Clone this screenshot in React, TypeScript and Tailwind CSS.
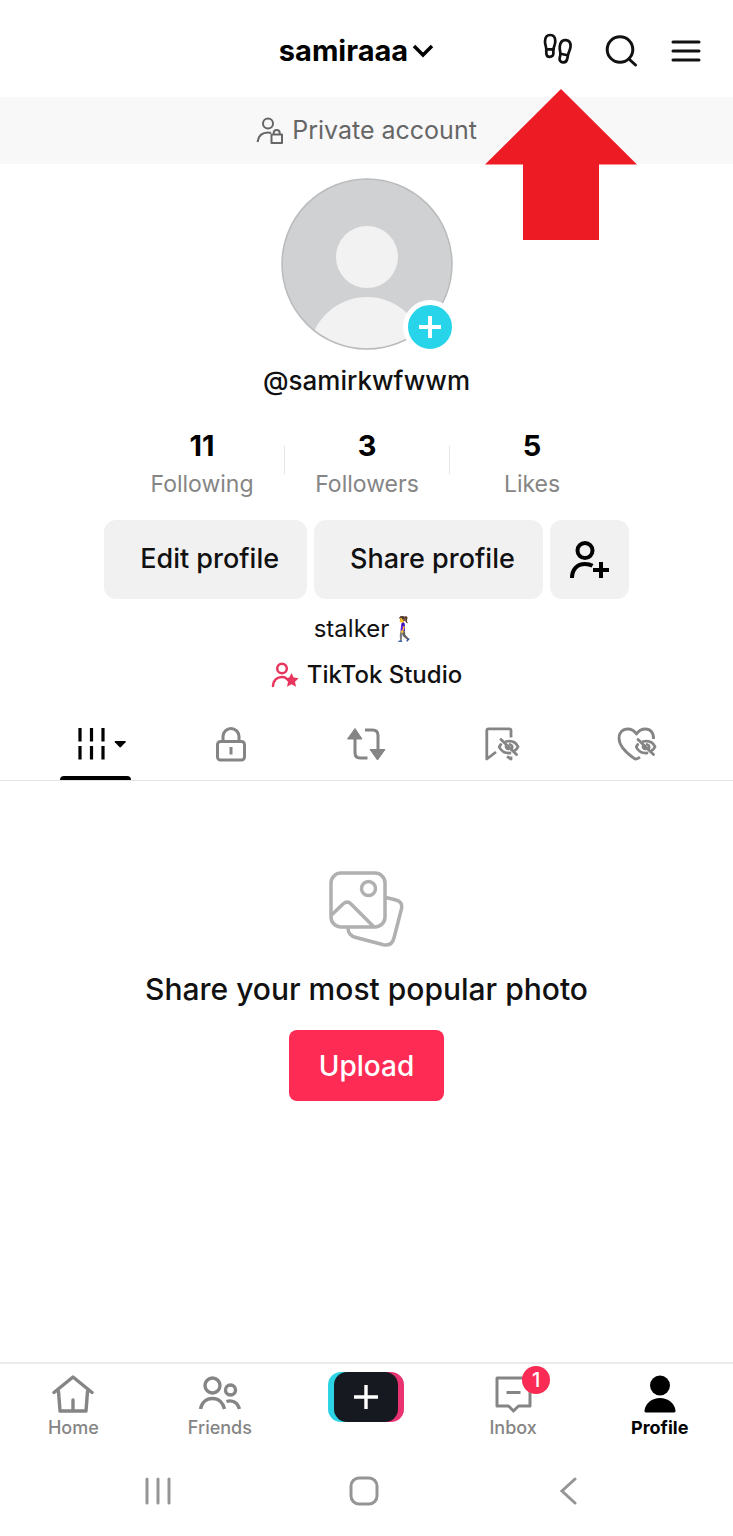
import { useState } from 'react';

const stats = [
  { value: '11', label: 'Following' },
  { value: '3', label: 'Followers' },
  { value: '5', label: 'Likes' },
];

const FootstepsIcon = () => (
  <svg width="30" height="36" viewBox="0 0 30 36" fill="none" stroke="currentColor" strokeWidth="2.700" strokeLinejoin="round" strokeLinecap="round">
    <path d="M7.300 2C4 2 2 4.600 2 8.600c0 3.200 1.300 5 1.300 8v3.600c0 2.400 1.200 3.600 3.500 3.600s3.800-1.500 3.600-3.900c-.2-2.100-.4-3.100.3-5.100.8-2.100 1.600-4 1.600-6.500C12.300 4.500 10.700 2 7.300 2Z" />
    <path d="M3.400 16.300h7.200" />
    <path d="M22.900 7.200c3.400.4 5 3.200 4.600 6.800-.4 3-1.900 5-2.400 7.800l-.8 3.800c-.6 2.700-2.200 4.200-4.700 3.700-2.300-.4-3.400-2.200-2.900-4.500.5-2.300 1.100-3.200.6-5.400-.5-2.200-.8-3.900-.5-6.200.6-4 2.700-6.400 6.100-6Z" />
    <path d="m17.500 20.800 7.100 1.500" />
  </svg>
);

const SearchIcon = () => (
  <svg width="34" height="34" viewBox="0 0 34 34" fill="none" stroke="currentColor" strokeWidth="3" strokeLinecap="round">
    <circle cx="15" cy="15.500" r="12.800" />
    <path d="m24.500 25.500 6 5.500" />
  </svg>
);

const MenuIcon = () => (
  <svg width="30" height="24" viewBox="0 0 30 24" fill="none" stroke="currentColor" strokeWidth="3" strokeLinecap="round">
    <path d="M2 3h26M2 12h26M2 21h26" />
  </svg>
);

const PrivateIcon = () => (
  <svg width="28" height="28" viewBox="0 0 28 28" fill="none" stroke="currentColor" strokeWidth="2">
    <circle cx="12" cy="6.500" r="5" />
    <path d="M1.500 25c.8-5.800 4.500-9.500 10.500-9.500 1.300 0 2.300.2 3 .5M15.500 17.500h10.500v8.500H15.500zM17.700 17.500v-1.500a3 3 0 0 1 6 0v1.500" strokeLinejoin="round" />
  </svg>
);

const AvatarPicture = () => (
  <svg width="172" height="172" viewBox="0 0 172 172">
    <clipPath id="avatar">
      <circle cx="86" cy="86" r="85" />
    </clipPath>
    <circle cx="86" cy="86" r="85" fill="#cfd1d3" />
    <g clipPath="url(#avatar)" fill="#f2f2f2">
      <circle cx="86" cy="79" r="31" />
      <circle cx="86" cy="177" r="58" />
    </g>
    <circle cx="86" cy="86" r="85" fill="none" stroke="#b9bbbc" strokeWidth="1.500" />
  </svg>
);

const AddFriendIcon = () => (
  <svg width="42" height="40" viewBox="0 0 42 40" fill="none" stroke="currentColor" strokeWidth="4">
    <circle cx="17" cy="10.500" r="7.500" />
    <path d="M4 38c0-8.500 5-14 13-14 3 0 5.500.6 7.500 1.800M33 22v16M25 30h16" />
  </svg>
);

const StudioIcon = () => (
  <svg width="28" height="26" viewBox="0 0 28 26" fill="none">
    <g stroke="#e8355d" strokeWidth="2.500">
      <circle cx="11" cy="6.500" r="4.800" />
      <path d="M2 24c.4-5.500 3.800-9 9-9 1.300 0 2.500.2 3.500.6" strokeLinecap="round" />
    </g>
    <path fill="#e8355d" d="m20.500 11 2.200 4.600 5 .6-3.700 3.500 1 5-4.500-2.500-4.500 2.500 1-5-3.700-3.500 5-.6Z" />
  </svg>
);

const GridIcon = () => (
  <svg width="62" height="34" viewBox="-12 0 62 34" fill="none">
    <path d="M3 1v13.500M14.500 1v13.500M26 1v13.500M3 19v13.500M14.500 19v13.500M26 19v13.500" stroke="currentColor" strokeWidth="3.200" />
    <path d="M38.500 14h9.500q1.500 0 .5 1.200l-4.500 4.800q-.8.800-1.600 0l-4.500-4.800q-.9-1.200.6-1.200Z" fill="currentColor" />
  </svg>
);

const LockIcon = () => (
  <svg width="32" height="36" viewBox="0 0 32 36" fill="none" stroke="currentColor" strokeWidth="3">
    <rect x="2.500" y="15.500" width="27" height="18.500" rx="3" />
    <path d="M8 15v-4.500a8 8 0 0 1 16 0V15M16 21v7.500" />
  </svg>
);

const RepostIcon = () => (
  <svg width="40" height="34" viewBox="0 0 40 34" fill="none">
    <path d="M9 10v15.500c0 3.500 1.500 5.500 5 5.500h7.500M19 3h7.500c3.500 0 5.500 2 5.500 5.500V24" stroke="currentColor" strokeWidth="3" />
    <path d="M9 1.500 16 12H1.500ZM31.500 33 24 22.500h15Z" fill="currentColor" stroke="currentColor" strokeLinejoin="round" />
  </svg>
);

// crossed-out eye shared by the saved and liked tabs
const HiddenEye = () => (
  <g strokeWidth="2.800" strokeLinecap="round">
    <path d="m17 13.500 15.500 15" />
    <path d="M22 15.500c5.500-1.200 10 .8 12 5.200-.7 1.600-1.700 2.700-3 3.600M26 27c-5 .3-8.800-1.800-10.800-6 .4-1 .9-1.700 1.600-2.500" />
    <path d="M26 18.500c1.600.4 2.500 1.800 2 3.500M22 20.500c.2 1.400 1 2.200 2.500 2.500" />
  </g>
);

const SavedHiddenIcon = () => (
  <svg width="36" height="36" viewBox="0 0 36 36" fill="none" stroke="currentColor" strokeWidth="2.800" strokeLinejoin="round">
    <path d="M12 26 2.800 33V4.500c0-1 .6-1.700 1.700-1.700h20.800c1.100 0 1.700.7 1.700 1.700V11.500M23 30.500l4 2.500v-2.500" />
    <HiddenEye />
  </svg>
);

const LikedHiddenIcon = () => (
  <svg width="40" height="36" viewBox="0 0 40 36" fill="none" stroke="currentColor" strokeWidth="2.800" strokeLinejoin="round">
    <path d="M36.500 13C37 7 33.500 3 28.300 3c-3.600 0-6.700 1.800-8.800 5-2.100-3.200-5.200-5-8.800-5C5.500 3 2 6.700 2 12c0 8 8 15.500 15.500 20.700 1.600.8 2.800.6 5.500-1.500" />
    <g transform="translate(4 0)">
      <HiddenEye />
    </g>
  </svg>
);

const PhotosIcon = () => (
  <svg width="76" height="78" viewBox="0 0 76 78" fill="none" stroke="currentColor" strokeWidth="3.500" strokeLinejoin="round">
    <rect x="2" y="3" width="54" height="54" rx="10" />
    <circle cx="39.500" cy="18.500" r="7" />
    <path d="m2.500 45 11.500-11c3-2.500 5.500-2.500 8 0L45 57M57 27.500l9 2.200c5.500 1.300 7.800 4.300 6.300 9.800l-7.200 28c-1.500 6-5 8.500-10.600 7.200L27 67.500c-5-1.200-8-4-8-9.500" />
  </svg>
);

const HomeIcon = () => (
  <svg width="42" height="38" viewBox="0 0 42 38" fill="none" stroke="currentColor" strokeWidth="3.400" strokeLinecap="round" strokeLinejoin="round">
    <path d="M2 17.500 21 2l19 15.500M6.500 16.500l1.500 19.500h26l1.500-19.500M21 35.500V25" />
  </svg>
);

const FriendsIcon = () => (
  <svg width="44" height="36" viewBox="0 0 44 36" fill="none" stroke="currentColor" strokeWidth="3.400">
    <circle cx="14.500" cy="9.500" r="7.500" />
    <circle cx="32.500" cy="14" r="5" />
    <path d="M2.500 33c1.200-6.500 6-10.500 12-10.500s10.500 4 12 10.500M28.500 25.500c6.500-2 11 1.500 13 7.500" />
  </svg>
);

const CreateIcon = () => (
  <svg width="76" height="50" viewBox="0 0 76 50">
    <rect width="56" height="50" rx="13" fill="#2cd3e5" />
    <rect x="20" width="56" height="50" rx="13" fill="#ea3371" />
    <rect x="6" width="64" height="50" rx="13" fill="#171921" />
    <path d="M38 13v24M26 25h24" stroke="#fff" strokeWidth="3.400" />
  </svg>
);

const InboxIcon = () => (
  <svg width="38" height="38" viewBox="0 0 38 38" fill="none" stroke="currentColor" strokeWidth="3" strokeLinejoin="round">
    <path d="M3 3h33v28H24.500L19.500 36l-5-5H3ZM12.500 17.500h14" />
  </svg>
);

const ProfileIcon = () => (
  <svg width="32" height="38" viewBox="0 0 32 38" fill="currentColor">
    <circle cx="16" cy="10.500" r="10" />
    <path d="M.5 35.500C1.500 28 8 23 16 23s14.500 5 15.500 12.500c.2 1-.5 2-1.500 2H2c-1 0-1.700-1-1.500-2Z" />
  </svg>
);

const tabs = [
  { name: 'Posts', icon: <GridIcon /> },
  { name: 'Private', icon: <LockIcon /> },
  { name: 'Reposts', icon: <RepostIcon /> },
  { name: 'Saved', icon: <SavedHiddenIcon /> },
  { name: 'Liked', icon: <LikedHiddenIcon /> },
];

const Header = () => (
  <header className="relative grid h-[97px] grid-cols-[1fr_auto_1fr] items-center pt-1 pl-3 pr-8">
    <button className="col-start-2 flex items-center gap-1 text-[29px] font-bold text-black">
      samiraaa
      <svg width="22" height="14" viewBox="0 0 22 14" fill="none" stroke="currentColor" strokeWidth="3.500">
        <path d="m2 2 9 9 9-9" />
      </svg>
    </button>
    <div className="flex items-center justify-end gap-8">
      <button aria-label="Profile views">
        <FootstepsIcon />
      </button>
      <button aria-label="Search">
        <SearchIcon />
      </button>
      <button aria-label="Menu">
        <MenuIcon />
      </button>
    </div>
    <svg className="absolute top-[89px] right-24 z-10" width="152" height="152" viewBox="0 0 152 152">
      <path d="M76 0 152 75.500h-38V151H38V75.500H0Z" fill="#ed1c24" />
    </svg>
  </header>
);

const BottomNav = () => (
  <nav className="grid h-[92px] grid-cols-5 border-t-2 border-[#ebebeb] text-lg font-medium text-[#858585]">
    <a href="#home" className="flex flex-col items-center pt-[10px]">
      <span className="flex h-10 items-center"><HomeIcon /></span>
      Home
    </a>
    <a href="#friends" className="flex flex-col items-center pt-[10px]">
      <span className="flex h-10 items-center"><FriendsIcon /></span>
      Friends
    </a>
    <button aria-label="Create" className="flex justify-center self-start pt-2">
      <CreateIcon />
    </button>
    <a href="#inbox" className="flex flex-col items-center pt-[10px]">
      <span className="relative flex h-10 items-center">
        <InboxIcon />
        <span className="absolute -top-2 left-7 flex size-7 items-center justify-center rounded-full bg-[#fa2c55] text-xl text-white">
          1
        </span>
      </span>
      Inbox
    </a>
    <a href="#profile" className="flex flex-col items-center pt-[10px] font-bold text-black">
      <span className="flex h-10 items-center"><ProfileIcon /></span>
      Profile
    </a>
  </nav>
);

const SystemBar = () => (
  <div className="flex h-[82px] items-center justify-between pr-[150px] pb-2 pl-36 text-[#959595]">
    <button aria-label="Recent apps">
      <svg width="28" height="28" viewBox="0 0 28 28" stroke="currentColor" strokeWidth="3" strokeLinecap="round">
        <path d="M3 2v24M14 2v24M25 2v24" />
      </svg>
    </button>
    <button aria-label="Home screen">
      <svg width="30" height="30" viewBox="0 0 30 30" fill="none" stroke="currentColor" strokeWidth="3">
        <rect x="2" y="2" width="26" height="26" rx="8" />
      </svg>
    </button>
    <button aria-label="Back">
      <svg width="28" height="28" viewBox="0 0 28 28" fill="none" stroke="currentColor" strokeWidth="3" strokeLinecap="round">
        <path d="M20 2 7 14l13 12" />
      </svg>
    </button>
  </div>
);

const App = () => {
  const [active, setActive] = useState('Posts');

  return (
    <div className="flex min-h-screen flex-col bg-white font-[Inter,sans-serif] text-[#111]">
      <Header />
      <div className="flex h-[67px] items-center justify-center gap-2 bg-[#f8f8f8] text-[25px] text-[#666]">
        <PrivateIcon />
        Private account
      </div>

      <main className="flex flex-col items-center pt-[14px]">
        <div className="relative">
          <AvatarPicture />
          <button
            aria-label="Add photo"
            className="absolute -right-1 -bottom-1 flex size-[54px] items-center justify-center rounded-full border-[5px] border-white bg-[#27d4ea]"
          >
            <svg width="24" height="24" viewBox="0 0 24 24" stroke="#fff" strokeWidth="4">
              <path d="M12 1v22M1 12h22" />
            </svg>
          </button>
        </div>
        <h1 className="mt-[11px] text-[26px] leading-10 font-medium">@samirkwfwwm</h1>

        <div className="mt-[25px] flex">
          {stats.map((s, i) => (
            <div key={s.label} className="flex w-[165px]">
              <div className={i > 0 ? 'mt-5 h-7 w-px bg-[#e5e5e5]' : 'mt-5 h-7 w-px'} />
              <div className="flex flex-1 flex-col items-center">
                <span className="text-[29px] leading-10 font-bold text-black">{s.value}</span>
                <span className="text-[23px] leading-9 text-[#858585]">{s.label}</span>
              </div>
            </div>
          ))}
        </div>

        <div className="mt-[18px] flex gap-[7px] text-[27px] font-medium">
          <button className="h-[79px] rounded-xl bg-[#f1f1f1] pr-7 pl-9">Edit profile</button>
          <button className="h-[79px] rounded-xl bg-[#f1f1f1] pr-7 pl-9">Share profile</button>
          <button aria-label="Add friends" className="flex h-[79px] w-[79px] items-center justify-center rounded-xl bg-[#f1f1f1] text-black">
            <AddFriendIcon />
          </button>
        </div>

        <p className="mt-3 text-2xl leading-9">stalker🚶‍♀️</p>
        <a href="#studio" className="mt-3 flex items-center gap-2 text-2xl leading-8 font-medium">
          <StudioIcon />
          TikTok Studio
        </a>

        <div role="tablist" className="mt-2 grid w-full grid-cols-5 border-b border-[#e3e3e3] px-7">
          {tabs.map((tab) => (
            <button
              key={tab.name}
              role="tab"
              aria-label={tab.name}
              aria-selected={active === tab.name}
              onClick={() => setActive(tab.name)}
              className={
                active === tab.name
                  ? 'flex flex-col items-center text-black'
                  : 'flex flex-col items-center text-[#858585]'
              }
            >
              <span className="flex h-[77px] items-center pt-3">{tab.icon}</span>
              {active === tab.name && <span className="h-1 w-[71px] rounded-t-full bg-black" />}
            </button>
          ))}
        </div>

        <section className="flex flex-col items-center pt-[89px] pb-12">
          <span className="text-[#b0b0b0]">
            <PhotosIcon />
          </span>
          <h2 className="mt-[21px] text-[30px] leading-10 font-medium">Share your most popular photo</h2>
          <button className="mt-[21px] h-[71px] rounded-lg bg-[#fe2c55] px-[30px] text-[28px] font-medium text-white">
            Upload
          </button>
        </section>
      </main>

      <footer className="mt-auto">
        <BottomNav />
        <SystemBar />
      </footer>
    </div>
  );
};

export default App;
